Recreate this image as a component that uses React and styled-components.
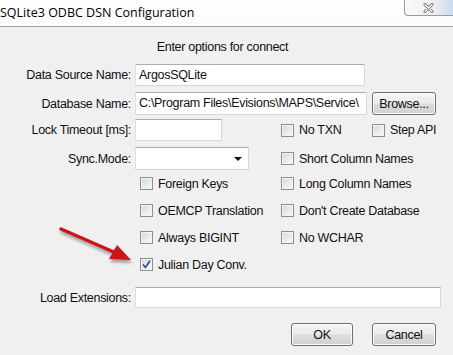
import React from 'react';
import styled, { createGlobalStyle } from 'styled-components';

const GlobalStyle = createGlobalStyle`
  body {
    margin: 0;
    background: #f0f0f0;
    font-family: "Liberation Sans", Arial, sans-serif;
  }
`;

const Window = styled.div`
  position: relative;
  width: 453px;
  height: 355px;
  overflow: hidden;
  background: #f0f0f0;
  color: #111;
  font-size: 12.5px;
  letter-spacing: -0.3px;
`;

const TitleBar = styled.div`
  display: flex;
  align-items: flex-start;
  height: 26px;
  background: linear-gradient(#ffffff, #fbfbfb);
  border-bottom: 1px solid #a3a3a3;
`;

const Title = styled.div`
  font-family: "Open Sans", "Noto Sans", sans-serif;
  font-size: 12.5px;
  letter-spacing: 0;
  line-height: 25px;
  color: #000;
`;

const CloseButton = styled.div`
  margin-left: auto;
  width: 46px;
  height: 15px;
  display: flex;
  align-items: center;
  justify-content: center;
  border-left: 1px solid #9a9a9a;
  border-bottom: 1px solid #9a9a9a;
  border-bottom-left-radius: 4px;
  background: linear-gradient(90deg, #fafafa 0%, #eeeeee 60%, #c9dbee 100%);
  padding-right: 2px;
`;

const Content = styled.div`
  display: flex;
  flex-direction: column;
`;

const Heading = styled.div`
  height: 22px;
  margin-top: 9px;
  padding-right: 8px;
  line-height: 22px;
  text-align: center;
`;

const Row = styled.div`
  display: flex;
  align-items: center;
  height: ${(p) => p.$h || 22}px;
  margin-top: ${(p) => p.$mt || 0}px;
`;

const Label = styled.div`
  width: 131px;
  margin-right: 4px;
  flex-shrink: 0;
  text-align: right;
  white-space: nowrap;
`;

const Cell = styled.div`
  display: flex;
  align-items: center;
  width: ${(p) => (p.$w ? `${p.$w}px` : 'auto')};
  padding-left: ${(p) => p.$pl || 0}px;
  flex-shrink: 0;
  box-sizing: border-box;
`;

const Field = styled.div`
  box-sizing: border-box;
  width: ${(p) => p.$w}px;
  height: ${(p) => p.$h || 22}px;
  line-height: ${(p) => (p.$h || 22) - 2}px;
  padding-left: 3px;
  background: #fff;
  border: 1px solid #d5d9de;
  border-top-color: #abadb3;
  border-left-color: #dde1e6;
  white-space: nowrap;
  overflow: hidden;
  flex-shrink: 0;
`;

const Select = styled(Field)`
  position: relative;
  &::after {
    content: "";
    position: absolute;
    right: 6px;
    top: 9px;
    border-left: 4px solid transparent;
    border-right: 4px solid transparent;
    border-top: 4px solid #111;
  }
`;

const Button = styled.div`
  box-sizing: border-box;
  width: ${(p) => p.$w}px;
  height: 23px;
  margin-left: ${(p) => p.$ml || 0}px;
  display: flex;
  align-items: center;
  justify-content: center;
  border: 1px solid #707070;
  border-radius: 3px;
  background: linear-gradient(#f4f4f4 0%, #ebebeb 48%, #dddddd 52%, #d0d0d0 100%);
  box-shadow: inset 0 0 0 1px #fbfbfb;
  flex-shrink: 0;
`;

const ButtonRow = styled(Row)`
  justify-content: flex-end;
  padding-right: 17px;
`;

const CheckWrap = styled.div`
  display: flex;
  align-items: center;
  gap: 5px;
  white-space: nowrap;
  width: ${(p) => (p.$w ? `${p.$w}px` : 'auto')};
  flex-shrink: 0;
`;

const Box = styled.div`
  box-sizing: border-box;
  width: 13px;
  height: 13px;
  border: 1px solid #8e8f8f;
  background: linear-gradient(135deg, #d6d6d6 0%, #ececec 60%, #fbfbfb 100%);
  box-shadow: inset 0 0 0 1px #f4f4f4;
  display: flex;
  align-items: center;
  justify-content: center;
  flex-shrink: 0;
`;

const Arrow = styled.svg`
  position: absolute;
  left: 0;
  top: 0;
  pointer-events: none;
`;

const Check = ({ label, checked, w }) => (
  <CheckWrap $w={w}>
    <Box>
      {checked && (
        <svg width="9" height="9" viewBox="0 0 9 9">
          <path d="M1 4.5 L3.5 7.5 L8 0.8" fill="none" stroke="#2b45a8" strokeWidth="1.6" />
        </svg>
      )}
    </Box>
    <span>{label}</span>
  </CheckWrap>
);

const checkRows = [
  ['Foreign Keys', 'Long Column Names'],
  ['OEMCP Translation', "Don't Create Database"],
  ['Always BIGINT', 'No WCHAR'],
  ['Julian Day Conv.', null],
];

export default function App() {
  return (
    <>
      <GlobalStyle />
      <Window>
        <TitleBar>
          <Title>SQLite3 ODBC DSN Configuration</Title>
          <CloseButton>
            <svg width="11" height="10" viewBox="0 0 11 10">
              <path d="M2 1.5 L9 8.5 M9 1.5 L2 8.5" stroke="#6a6a6a" strokeWidth="3" strokeLinecap="round" />
              <path d="M2 1.5 L9 8.5 M9 1.5 L2 8.5" stroke="#fff" strokeWidth="1.2" strokeLinecap="round" />
            </svg>
          </CloseButton>
        </TitleBar>
        <Content>
          <Heading>Enter options for connect</Heading>
          <Row $mt={6}>
            <Label>Data Source Name:</Label>
            <Field $w={230}>ArgosSQLite</Field>
          </Row>
          <Row $mt={6} $h={23}>
            <Label>Database Name:</Label>
            <Field $w={232} $h={23}>C:\Program Files\Evisions\MAPS\Service\</Field>
            <Button $w={64} $ml={5}>Browse...</Button>
          </Row>
          <Row $mt={4}>
            <Label>Lock Timeout [ms]:</Label>
            <Cell $w={146}>
              <Field $w={87} />
            </Cell>
            <Check label="No TXN" w={91} />
            <Check label="Step API" />
          </Row>
          <Row $mt={6} $h={23}>
            <Label>Sync.Mode:</Label>
            <Cell $w={146}>
              <Select $w={114} $h={23} />
            </Cell>
            <Check label="Short Column Names" />
          </Row>
          {checkRows.map(([left, right]) => (
            <Row key={left} $h={27}>
              <Label />
              <Cell $w={146} $pl={5}>
                <Check label={left} checked={left === 'Julian Day Conv.'} />
              </Cell>
              {right && <Check label={right} />}
            </Row>
          ))}
          <Row $mt={9} $h={21}>
            <Label>Load Extensions:</Label>
            <Field $w={306} $h={21} />
          </Row>
          <ButtonRow $mt={15} $h={23}>
            <Button $w={62}>OK</Button>
            <Button $w={64} $ml={19}>Cancel</Button>
          </ButtonRow>
        </Content>
        <Arrow width="453" height="355" viewBox="0 0 453 355">
          <defs>
            <filter id="shadow" x="-20%" y="-20%" width="140%" height="160%">
              <feDropShadow dx="1" dy="3" stdDeviation="1.5" floodColor="#000" floodOpacity="0.35" />
            </filter>
          </defs>
          <g filter="url(#shadow)">
            <path d="M61 229 L116 253" stroke="#c8121a" strokeWidth="3.5" strokeLinecap="round" />
            <polygon points="131,260 109,259 117,245" fill="#c8121a" />
          </g>
        </Arrow>
      </Window>
    </>
  );
}
